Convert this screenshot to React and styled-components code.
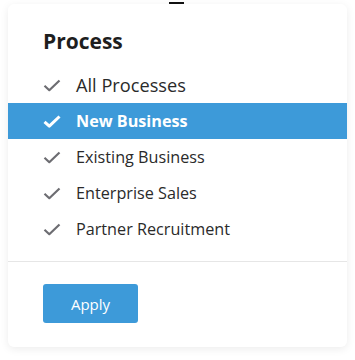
import React, { useState } from "react";
import styled, { createGlobalStyle } from "styled-components";

const GlobalStyle = createGlobalStyle`
  body {
    margin: 0;
    background: #ffffff;
    font-family: "Open Sans", "Liberation Sans", sans-serif;
  }
`;

const Page = styled.div`
  position: relative;
  padding: 4px 8px 12px 8px;
`;

const Handle = styled.div`
  position: absolute;
  top: 2px;
  left: 169px;
  width: 15px;
  height: 2px;
  background: #111111;
`;

const Card = styled.div`
  background: #ffffff;
  border-radius: 6px;
  box-shadow: 0 2px 8px rgba(0, 0, 0, 0.08);
  padding-top: 22px;
`;

const Title = styled.h2`
  margin: 0 0 11px 35px;
  font-size: 21px;
  font-weight: 700;
  color: #1e1e1e;
  line-height: 30px;
`;

const List = styled.ul`
  list-style: none;
  margin: 0;
  padding: 0 0 14px 0;
  border-bottom: 1px solid #e6e6e6;
`;

const Item = styled.li`
  display: flex;
  align-items: center;
  gap: 15px;
  height: 36px;
  padding-left: 35px;
  background: ${(p) => (p.$active ? "#3d9ad9" : "transparent")};
  color: ${(p) => (p.$active ? "#ffffff" : "#2a2a2a")};
  font-size: ${(p) => p.$size || 16.2}px;
  font-weight: ${(p) => (p.$active ? 700 : 400)};
  cursor: pointer;
`;

const Check = styled.svg`
  width: 18px;
  height: 13px;
  flex: none;
`;

const Footer = styled.div`
  padding: 22px 35px 24px 35px;
`;

const ApplyButton = styled.button`
  width: 95px;
  height: 39px;
  border: none;
  border-radius: 3px;
  background: #3d9ad9;
  color: #ffffff;
  font-family: "Open Sans", "Liberation Sans", sans-serif;
  font-size: 15px;
  cursor: pointer;
`;

const options = [
  { label: "All Processes", size: 18.2 },
  { label: "New Business" },
  { label: "Existing Business" },
  { label: "Enterprise Sales" },
  { label: "Partner Recruitment" },
];

const CheckIcon = ({ active }) => (
  <Check viewBox="0 0 18 13">
    <polyline
      points="1.5,6.8 6.3,11.2 16.5,1.5"
      fill="none"
      stroke={active ? "#ffffff" : "#6d6d72"}
      strokeWidth={active ? 3 : 2.2}
      strokeLinejoin="round"
    />
  </Check>
);

const App = () => {
  const [selected, setSelected] = useState("New Business");

  return (
    <>
      <GlobalStyle />
      <Page>
        <Handle />
        <Card>
          <Title>Process</Title>
          <List>
            {options.map((o) => (
              <Item
                key={o.label}
                $active={o.label === selected}
                $size={o.size}
                onClick={() => setSelected(o.label)}
              >
                <CheckIcon active={o.label === selected} />
                {o.label}
              </Item>
            ))}
          </List>
          <Footer>
            <ApplyButton>Apply</ApplyButton>
          </Footer>
        </Card>
      </Page>
    </>
  );
};

export default App;
